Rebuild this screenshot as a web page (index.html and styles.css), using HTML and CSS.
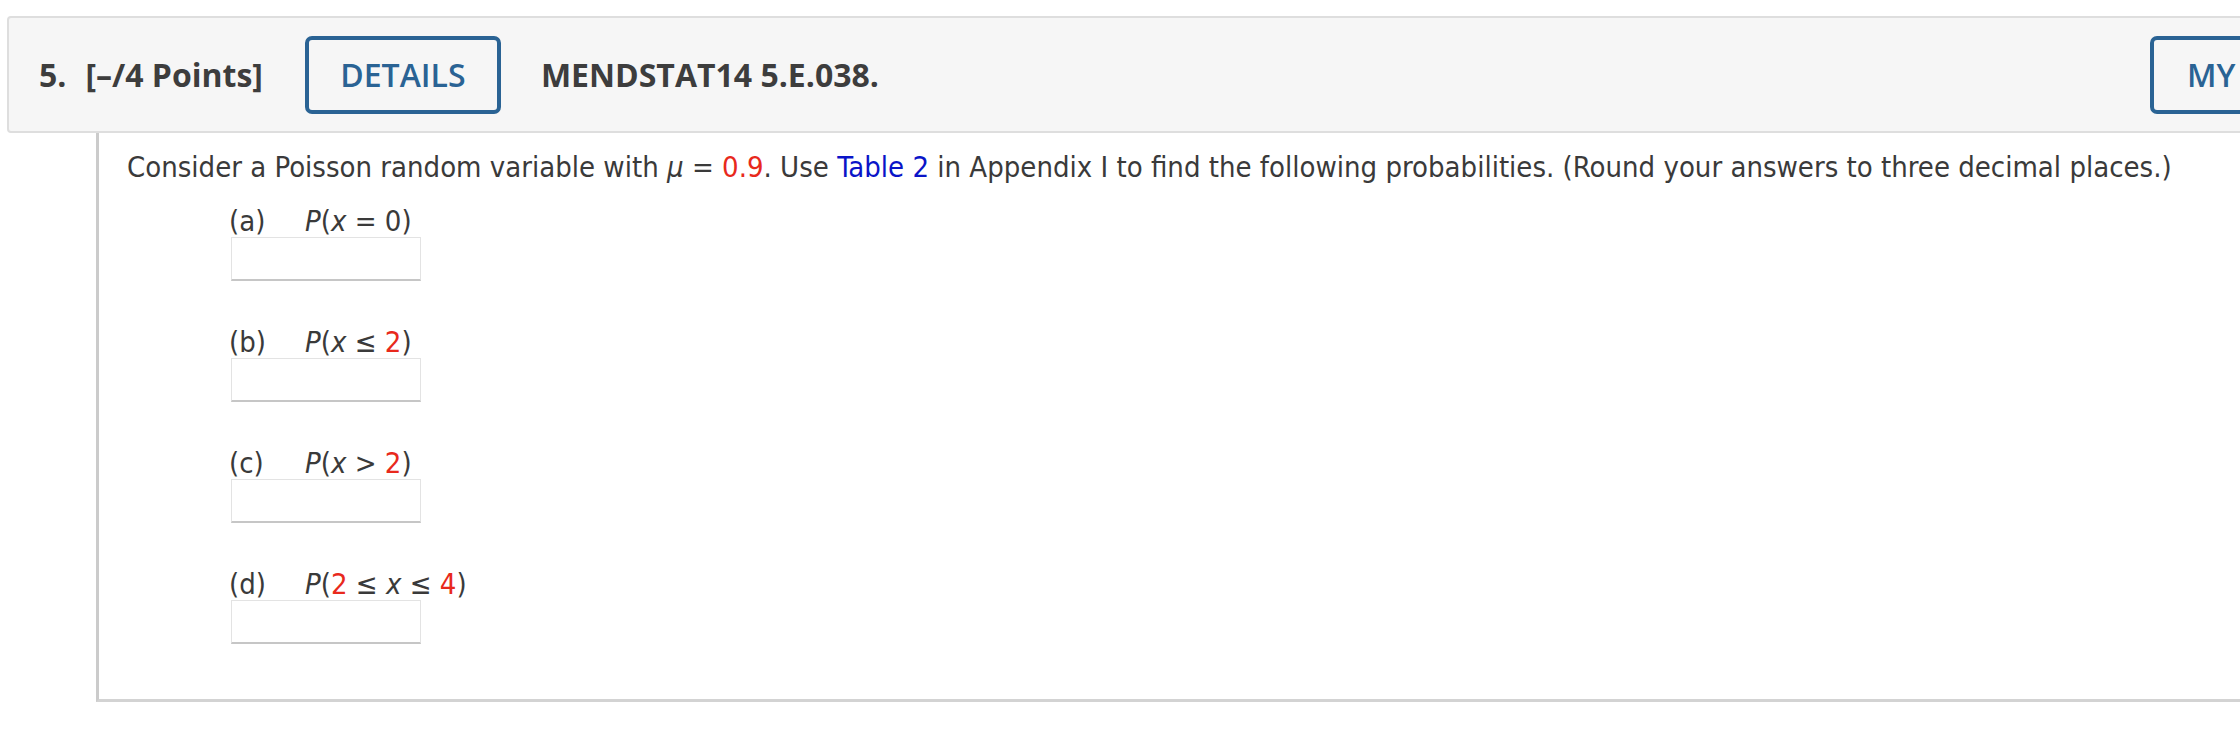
FILE: index.html
```html
<!DOCTYPE html>
<html>
<head>
<meta charset="utf-8">
<link rel="stylesheet" href="styles.css">
</head>
<body>
<div class="page">
  <div class="qhead">
    <span class="qnum">5.</span>
    <span class="qpts">[–/4 Points]</span>
    <span class="btn">DETAILS</span>
    <span class="qid">MENDSTAT14 5.E.038.</span>
    <span class="spacer"></span>
    <span class="btn btn-my">MY</span>
  </div>
  <div class="qbody">
    <p class="intro">Consider a Poisson random variable with <i>μ</i> = <span class="red">0.9</span>. Use <span class="link">Table 2</span> in Appendix I to find the following probabilities. (Round your answers to three decimal places.)</p>
    <div class="parts">
      <div class="part">
        <div class="plabel"><span class="letter">(a)</span><span class="expr"><i>P</i>(<i>x</i> = 0)</span></div>
        <div class="answer"></div>
      </div>
      <div class="part">
        <div class="plabel"><span class="letter">(b)</span><span class="expr"><i>P</i>(<i>x</i> ≤ <span class="red">2</span>)</span></div>
        <div class="answer"></div>
      </div>
      <div class="part">
        <div class="plabel"><span class="letter">(c)</span><span class="expr"><i>P</i>(<i>x</i> &gt; <span class="red">2</span>)</span></div>
        <div class="answer"></div>
      </div>
      <div class="part">
        <div class="plabel"><span class="letter">(d)</span><span class="expr"><i>P</i>(<span class="red">2</span> ≤ <i>x</i> ≤ <span class="red">4</span>)</span></div>
        <div class="answer"></div>
      </div>
    </div>
  </div>
</div>
</body>
</html>
```

FILE: styles.css
```css
html, body {
  margin: 0;
  padding: 0;
  background: #ffffff;
  overflow: hidden;
}
.page {
  width: 2240px;
  height: 732px;
  overflow: hidden;
  padding-top: 16px;
  box-sizing: border-box;
}
.qhead {
  margin-left: 7px;
  width: 2300px;
  height: 117px;
  box-sizing: border-box;
  background: #f6f6f6;
  border: 2px solid #dedede;
  border-radius: 4px;
  display: flex;
  align-items: center;
  padding-left: 30px;
  font-family: "Open Sans", "Liberation Sans", sans-serif;
  font-weight: 700;
  font-size: 32px;
  color: #3d3d3d;
}
.qnum {
  margin-right: 19px;
}
.qpts {
  margin-right: 42px;
}
.btn {
  display: flex;
  align-items: center;
  justify-content: center;
  box-sizing: border-box;
  height: 78px;
  width: 196px;
  border: 4px solid #2a6394;
  border-radius: 7px;
  color: #2a6394;
  font-weight: 600;
  margin-right: 40px;
}
.btn-my {
  width: 155px;
  justify-content: flex-start;
  padding-left: 33px;
  margin-right: 0;
}
.spacer {
  flex: 1;
}
.qid {
  flex: none;
}
.qbody {
  margin-left: 96px;
  width: 2300px;
  height: 569px;
  box-sizing: border-box;
  border-left: 3px solid #cbcbcb;
  border-bottom: 3px solid #d3d3d3;
  padding: 14px 0 0 28px;
  font-family: "DejaVu Sans Condensed", "DejaVu Sans", Verdana, sans-serif;
  font-size: 29px;
  color: #3a3a3a;
}
.intro {
  margin: 0;
  line-height: 40px;
}
.red {
  color: #e8291c;
}
.link {
  color: #0a14c8;
}
.parts {
  margin-left: 102px;
  margin-top: 18px;
}
.part {
  height: 121px;
}
.plabel {
  display: flex;
  line-height: 32px;
}
.letter {
  width: 76px;
}
.answer {
  width: 190px;
  height: 44px;
  box-sizing: border-box;
  margin-left: 2px;
  border: 1px solid #e3e3e3;
  border-bottom: 2px solid #c6c6c6;
  background: #fff;
}
```
